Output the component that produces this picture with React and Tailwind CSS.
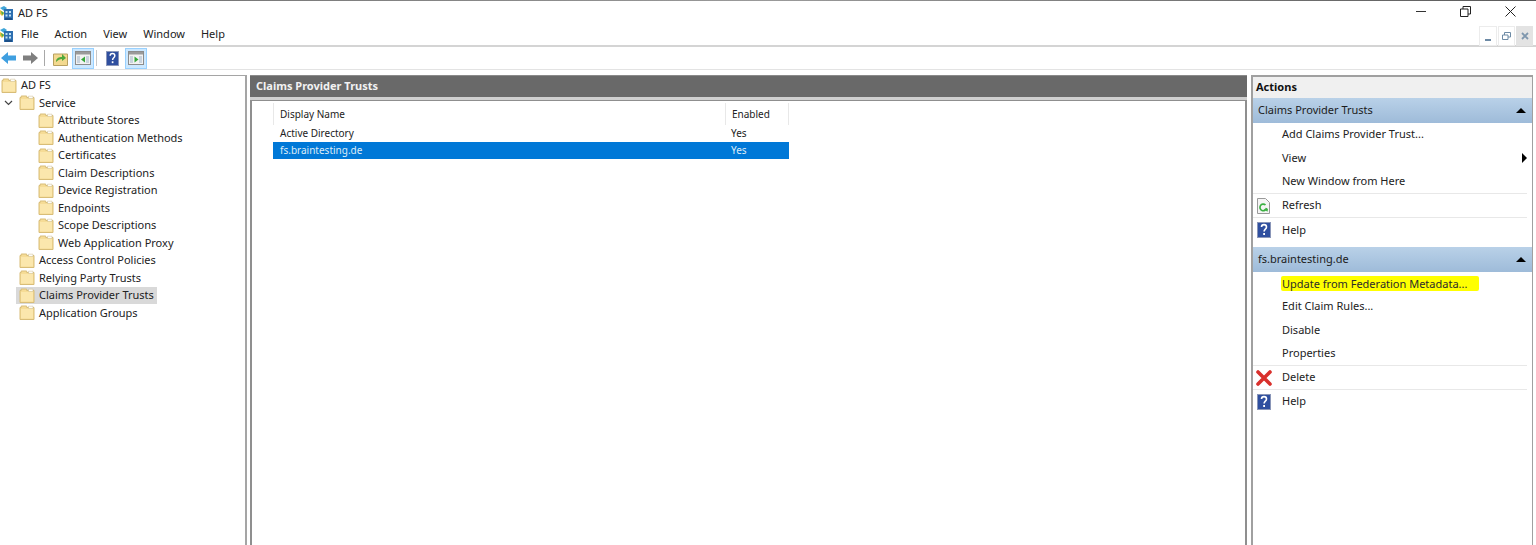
import React from "react";

const Folder = () => (
  <svg width="16" height="15" viewBox="0 0 16 15" className="shrink-0">
    <path d="M1 2.5h1.2V1h5.5v1.5H15v12H1z" fill="#f6dc96" stroke="#d8bd78" strokeWidth="1" />
    <path d="M2 4h12v9.5H2z" fill="#fbe7ad" />
    <path d="M9.5 1.2h4.5v2.2H9.5z" fill="#ffffff" stroke="#c9b98a" strokeWidth="0.5" />
  </svg>
);

const AppIcon = () => (
  <svg width="14" height="16" viewBox="0 0 14 16" className="shrink-0">
    <path d="M0 3l4-2 3 2-3 3z" fill="#3fa5d8" />
    <path d="M0 5l5 3-3 3-2-2z" fill="#e7c23c" />
    <path d="M1 6l3 2-2 2z" fill="#4caf50" />
    <rect x="4" y="4" width="9" height="11" fill="#2d6fb0" />
    <path d="M5.5 6h2v2h-2zM9 6h2v2H9zM5.5 9.5h2v2h-2zM9 9.5h2v2H9z" fill="#bfe0f5" />
    <rect x="5" y="13" width="7" height="2" fill="#1d4f87" />
  </svg>
);

const HelpIcon = ({ s = 14 }) => (
  <svg width={s} height={s + 2} viewBox="0 0 14 16" className="shrink-0">
    <rect x="0.5" y="0.5" width="13" height="15" fill="#2f4f9f" stroke="#8a96b8" />
    <path d="M4.5 5c0-3.2 5-3.2 5 0 0 2.2-2.4 2.2-2.4 4.5" fill="none" stroke="#ffffff" strokeWidth="1.6" />
    <rect x="6.2" y="11" width="1.8" height="2" fill="#ffffff" />
  </svg>
);

const PaneToggle = ({ right }) => (
  <div className="w-[22px] h-[21px] bg-[#cce8ff] border border-[#99d1ff] flex items-center justify-center">
    <svg width="16" height="14" viewBox="0 0 16 14">
      <rect x="0.5" y="0.5" width="15" height="13" fill="#f2f2f2" stroke="#8c8c8c" />
      <rect x="1" y="1" width="14" height="2.5" fill="#9a9a9a" />
      <rect x="2" y="5" width="3" height="7" fill="#c9d3dd" />
      <rect x="11" y="5" width="3" height="7" fill="#c9d3dd" />
      {right ? <path d="M6.5 5.5l4 3-4 3z" fill="#35a83a" /> : <path d="M10 5.5l-4 3 4 3z" fill="#35a83a" />}
    </svg>
  </div>
);

const TreeRow = ({ indent, label, chevron, selected }) => (
  <div className={`h-[17.5px] flex items-center ${indent}`}>
    {chevron && (
      <svg width="9" height="6" viewBox="0 0 9 6" className="absolute left-[4px]">
        <path d="M1 1l3.5 3.5L8 1" fill="none" stroke="#444" strokeWidth="1.2" />
      </svg>
    )}
    <div className={`flex items-center h-[17.5px] ${selected ? "bg-[#d9d9d9] pr-[3px] pl-[3px] -ml-[3px]" : ""}`}>
      <Folder />
      <span className="ml-[4px] whitespace-nowrap">{label}</span>
    </div>
  </div>
);

const Section = ({ label, h }) => (
  <div className={`${h} flex items-center justify-between pl-[5px] pr-[6px] bg-gradient-to-b from-[#b9d1e8] to-[#9ebbd9] text-[#1c1c1c]`}>
    <span>{label}</span>
    <svg width="10" height="5" viewBox="0 0 10 5"><path d="M0 5L5 0l5 5z" fill="#000" /></svg>
  </div>
);

const Action = ({ label, h, icon, arrow, line, highlight }) => (
  <div className={`${h} relative flex items-center pl-[29px] pr-[5px] justify-between ${line ? "border-b border-[#e8e8e8] mr-[5px] pr-0" : ""}`}>
    {icon && <span className="absolute left-[4px] top-1/2 -translate-y-1/2 flex">{icon}</span>}
    {highlight ? (
      <span className="bg-[#ffff00] -ml-[1px] pl-[1px] pr-[12px] h-[15px] leading-[15px] rounded-[2px] text-[#2b2b2b]">{label}</span>
    ) : (
      <span>{label}</span>
    )}
    {arrow && <svg width="5" height="10" viewBox="0 0 5 10"><path d="M0 0l5 5-5 5z" fill="#000" /></svg>}
  </div>
);

const RefreshIcon = (
  <svg width="13" height="16" viewBox="0 0 13 16">
    <path d="M0.5 0.5h8l4 4v11H0.5z" fill="#f5f5f5" stroke="#9a9a9a" />
    <path d="M9.5 10a3.3 3.3 0 1 1-1-3" fill="none" stroke="#3cb043" strokeWidth="1.7" />
    <path d="M6.5 11l4.5-.2-.5 3z" fill="#3cb043" />
  </svg>
);

const DeleteIcon = (
  <svg width="16" height="16" viewBox="0 0 16 16" className="-ml-[1px]">
    <path d="M2 2l12 12M14 2L2 14" stroke="#d9302c" strokeWidth="3.6" strokeLinecap="round" />
  </svg>
);

export default function App() {
  return (
    <div className="w-[1536px] h-[545px] overflow-hidden bg-white flex flex-col text-[11px] text-[#222] font-['Noto_Sans','Open_Sans',sans-serif]">
      <div className="h-px shrink-0 bg-gradient-to-r from-[#6a6a6a] via-[#9a9a9a] to-[#5a5a5a]" />
      <div className="h-[24px] shrink-0 flex items-center justify-between pr-[20px]">
        <div className="flex items-center">
          <AppIcon />
          <span className="ml-[4px] mt-[1px]">AD FS</span>
        </div>
        <div className="flex items-center gap-[34px] -mt-[3px]">
          <div className="w-[10px] h-px bg-[#333]" />
          <svg width="11" height="11" viewBox="0 0 11 11">
            <path d="M0.5 3h7.5v7.5H0.5zM3 3V0.5h7.5V8H8" fill="none" stroke="#222" />
          </svg>
          <svg width="11" height="11" viewBox="0 0 11 11">
            <path d="M0.5 0.5l10 10M10.5 0.5l-10 10" stroke="#222" />
          </svg>
        </div>
      </div>
      <div className="h-[20px] shrink-0 flex items-center justify-between border-b-2 border-[#d4d4d4] box-content">
        <div className="flex items-center">
          <AppIcon />
          <div className="ml-[7px] flex gap-[16px] -mt-[2px]">
            <span>File</span>
            <span>Action</span>
            <span>View</span>
            <span>Window</span>
            <span>Help</span>
          </div>
        </div>
        <div className="flex gap-[1px] mr-[3px] -mb-[2px] h-[20px]">
          <div className="w-[18px] border border-[#ececec] flex items-end justify-center pb-[4px]"><div className="w-[6px] h-[2px] bg-[#6d8aa5]" /></div>
          <div className="w-[17px] border border-[#ececec] flex items-center justify-center">
            <svg width="9" height="8" viewBox="0 0 9 8"><path d="M0.5 3h5.5v4.5H0.5zM2.5 3V0.5h6V5H6" fill="none" stroke="#6d8aa5" /></svg>
          </div>
          <div className="w-[17px] bg-[#e3e3e3] flex items-center justify-center">
            <svg width="8" height="8" viewBox="0 0 8 8"><path d="M1 1l6 6M7 1L1 7" stroke="#7e96ad" strokeWidth="1.8" /></svg>
          </div>
        </div>
      </div>
      <div className="h-[22px] shrink-0 flex items-center border-b border-[#e3e3e3] box-content">
        <svg width="16" height="14" viewBox="0 0 16 14" className="ml-px">
          <path d="M0 7l7-6v3.5h8v5H7V13z" fill="#3f9fe0" />
        </svg>
        <svg width="16" height="14" viewBox="0 0 16 14" className="ml-[5px]">
          <path d="M16 7L9 1v3.5H1v5h8V13z" fill="#7f7f7f" />
        </svg>
        <div className="w-px h-[16px] bg-[#a8a8a8] ml-[6px]" />
        <svg width="15" height="15" viewBox="0 0 15 15" className="ml-[8px]">
          <path d="M0.5 3h14v11.5H0.5z" fill="#f3d98f" stroke="#b8a060" />
          <path d="M3 11c0-4 3-5 6-5V3l4 4-4 3V8c-2 0-4 1-6 3z" fill="#4ea83c" />
        </svg>
        <div className="ml-[4px]"><PaneToggle /></div>
        <div className="w-px h-[16px] bg-[#c8c8c8] ml-[2px]" />
        <div className="ml-[9px]"><HelpIcon s={13} /></div>
        <div className="ml-[6px]"><PaneToggle right /></div>
      </div>
      <div className="flex-1 flex pt-[5px] min-h-0">
        <div className="w-[247px] shrink-0 border-t border-r-2 border-[#a5a5a5] relative pt-[0.5px]">
          <TreeRow indent="pl-[1px]" label="AD FS" />
          <TreeRow indent="pl-[19px]" label="Service" chevron />
          <TreeRow indent="pl-[38px]" label="Attribute Stores" />
          <TreeRow indent="pl-[38px]" label="Authentication Methods" />
          <TreeRow indent="pl-[38px]" label="Certificates" />
          <TreeRow indent="pl-[38px]" label="Claim Descriptions" />
          <TreeRow indent="pl-[38px]" label="Device Registration" />
          <TreeRow indent="pl-[38px]" label="Endpoints" />
          <TreeRow indent="pl-[38px]" label="Scope Descriptions" />
          <TreeRow indent="pl-[38px]" label="Web Application Proxy" />
          <TreeRow indent="pl-[19px]" label="Access Control Policies" />
          <TreeRow indent="pl-[19px]" label="Relying Party Trusts" />
          <TreeRow indent="pl-[19px]" label="Claims Provider Trusts" selected />
          <TreeRow indent="pl-[19px]" label="Application Groups" />
        </div>
        <div className="w-[997px] shrink-0 ml-[3px] flex flex-col">
          <div className="h-[22px] shrink-0 bg-[#696969] border-t border-[#8a8a8a] flex items-center pl-[6px] pb-[1px] font-bold text-[#f2f2f2]">
            Claims Provider Trusts
          </div>
          <div className="h-[3px] shrink-0 bg-[#cfcfcf]" />
          <div className="flex-1 border-l-2 border-r-2 border-t border-[#8f8f8f] pl-[21px] pt-[2px] text-[10px]">
            <div className="flex h-[22px] w-[516px]">
              <div className="w-[452px] border-l border-[#e8e8e8] pl-[6px] flex items-center">Display Name</div>
              <div className="w-[64px] border-l border-r border-[#e8e8e8] pl-[6px] flex items-center">Enabled</div>
            </div>
            <div className="flex h-[17px] w-[516px] items-center">
              <div className="w-[452px] pl-[7px]">Active Directory</div>
              <div className="pl-[6px]">Yes</div>
            </div>
            <div className="flex h-[17px] w-[516px] items-center bg-[#0078d7] text-[#dcecf8]">
              <div className="w-[452px] pl-[7px]">fs.braintesting.de</div>
              <div className="pl-[6px]">Yes</div>
            </div>
          </div>
        </div>
        <div className="w-[282px] shrink-0 ml-[4px] border-l-2 border-r border-t-2 border-[#a0a0a0]">
          <div className="h-[21px] bg-[#f0f0f0] flex items-center pl-[3px] font-bold text-[#111]">Actions</div>
          <Section label="Claims Provider Trusts" h="h-[25px]" />
          <Action label="Add Claims Provider Trust..." h="h-[23px]" />
          <Action label="View" h="h-[24px]" arrow />
          <Action label="New Window from Here" h="h-[24px]" line />
          <Action label="Refresh" h="h-[24px]" icon={RefreshIcon} line />
          <Action label="Help" h="h-[24px]" icon={<HelpIcon />} />
          <div className="h-[5px]" />
          <Section label="fs.braintesting.de" h="h-[25px]" />
          <Action label="Update from Federation Metadata..." h="h-[22px]" highlight />
          <Action label="Edit Claim Rules..." h="h-[24px]" />
          <Action label="Disable" h="h-[24px]" />
          <Action label="Properties" h="h-[24px]" line />
          <Action label="Delete" h="h-[24px]" icon={DeleteIcon} line />
          <Action label="Help" h="h-[23px]" icon={<HelpIcon />} />
        </div>
      </div>
    </div>
  );
}
